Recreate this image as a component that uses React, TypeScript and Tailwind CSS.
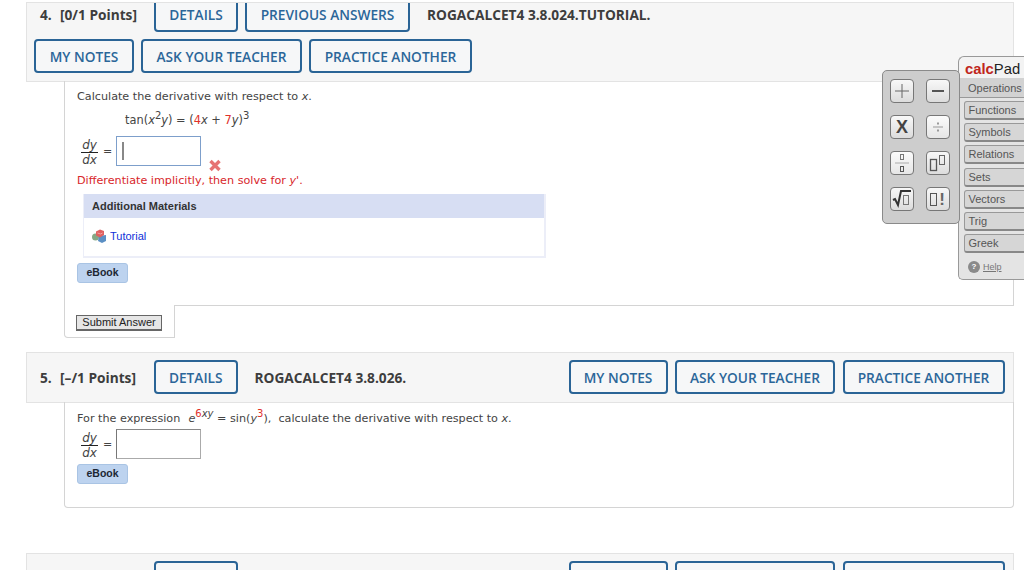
import type { ReactNode } from "react";

const sans = "font-['Open_Sans',sans-serif]";
const body = "font-['DejaVu_Sans',sans-serif]";
const arial = "font-['Liberation_Sans',Arial,sans-serif]";

function HeadButton({ children, className = "" }: { children?: ReactNode; className?: string }) {
    return (
        <button className={`${sans} h-[34px] shrink-0 rounded-[4px] border-2 border-[#2a6496] bg-[#f6f7f8] pt-[2px] text-[13.7px] font-semibold whitespace-nowrap text-[#2b6699] ${className}`}>
            {children}
        </button>
    );
}

function Label({ n, pts }: { n: string; pts: string }) {
    return (
        <div className={`${sans} flex w-[114px] shrink-0 gap-[5px] pt-[2px] text-[13.7px] font-bold text-[#3d3d3d]`}>
            <span className="w-[15px]">{n}</span>
            <span>{pts}</span>
        </div>
    );
}

function Code({ children }: { children: ReactNode }) {
    return <span className={`${sans} ml-[17px] pt-[2px] text-[13.7px] font-bold whitespace-nowrap text-[#3d3d3d]`}>{children}</span>;
}

function Frac() {
    return (
        <div className={`${body} flex w-[39px] shrink-0 items-center pt-[2px] pl-[4px] text-[12px] text-[#444]`}>
            <div className="flex w-[17px] flex-col items-center leading-[14px] italic">
                <span className="w-full border-b border-[#222] text-center">dy</span>
                <span>dx</span>
            </div>
            <span className="ml-[5px] text-[11px]">=</span>
        </div>
    );
}

function EBook() {
    return (
        <button className={`${arial} flex h-[20px] w-[51px] items-center justify-center rounded-[3px] border border-[#a9c4e4] bg-[#bdd3ef] text-[10.5px] font-bold text-[#1c2733]`}>
            eBook
        </button>
    );
}

function TutorialIcon() {
    return (
        <svg width="15" height="14" viewBox="0 0 15 14">
            <ellipse cx="3.5" cy="8" rx="3.5" ry="3.5" fill="#86a886" />
            <path d="M7 7l7 -1v6l-4 2l-4 -2z" fill="#5b8fc4" />
            <path d="M4 2.5l4 -2l4 1.5v4l-4 2.5l-4 -2z" fill="#e0605f" />
            <path d="M5.5 4l3 1l2 -1" fill="none" stroke="#f3b4b4" strokeWidth="0.8" />
        </svg>
    );
}

function KeyBtn({ children, light }: { children: ReactNode; light?: boolean }) {
    return (
        <div className={`flex h-[24px] w-[24px] items-center justify-center rounded-[4px] border border-[#777] bg-linear-to-b ${light ? "from-[#fbfbfb] to-[#e6e6e6]" : "from-[#f8f8f8] to-[#dcdcdc]"}`}>
            {children}
        </div>
    );
}

function CalcPad() {
    const tabs = ["Functions", "Symbols", "Relations", "Sets", "Vectors", "Trig", "Greek"];
    return (
        <>
            <div className="absolute top-[70px] left-[882px] z-20 h-[154px] w-[78px] rounded-[5px] border border-[#8a8a8a] bg-[#cdcdcd] pt-[8px] pl-[7px]">
                <div className="grid w-[60px] grid-cols-2 gap-x-[11px] gap-y-[12px]">
                    <KeyBtn>
                        <svg width="14" height="14" viewBox="0 0 14 14">
                            <path d="M7 0v14M0 7h14" stroke="#666" strokeWidth="1" />
                        </svg>
                    </KeyBtn>
                    <KeyBtn>
                        <svg width="14" height="14" viewBox="0 0 14 14">
                            <path d="M1 7h12" stroke="#555" strokeWidth="2" />
                        </svg>
                    </KeyBtn>
                    <KeyBtn>
                        <span className={`${arial} text-[18px] leading-none font-bold text-[#444]`}>X</span>
                    </KeyBtn>
                    <KeyBtn light>
                        <svg width="12" height="12" viewBox="0 0 12 12">
                            <path d="M1 6h10" stroke="#999" strokeWidth="1" />
                            <rect x="5" y="1.5" width="2" height="2" fill="#999" />
                            <rect x="5" y="8.5" width="2" height="2" fill="#999" />
                        </svg>
                    </KeyBtn>
                    <KeyBtn light>
                        <svg width="16" height="20" viewBox="0 0 16 20">
                            <rect x="6.5" y="1.5" width="3" height="5" fill="none" stroke="#777" />
                            <path d="M1 10h14" stroke="#aaa" />
                            <rect x="6.5" y="13.5" width="3" height="5" fill="none" stroke="#555" />
                        </svg>
                    </KeyBtn>
                    <KeyBtn>
                        <svg width="18" height="18" viewBox="0 0 18 18">
                            <rect x="1.5" y="5.5" width="6" height="11" fill="none" stroke="#555" strokeWidth="1.3" />
                            <rect x="10.5" y="1.5" width="5" height="9" fill="none" stroke="#666" />
                        </svg>
                    </KeyBtn>
                    <KeyBtn>
                        <svg width="20" height="18" viewBox="0 0 20 18">
                            <path d="M1 10l2 -1l3 6l3 -14h10" fill="none" stroke="#333" strokeWidth="2" />
                            <rect x="11.5" y="5.5" width="5" height="9" fill="none" stroke="#777" />
                        </svg>
                    </KeyBtn>
                    <KeyBtn>
                        <div className="flex items-center gap-[2px]">
                            <svg width="7" height="13" viewBox="0 0 7 13">
                                <rect x="0.5" y="0.5" width="6" height="12" fill="none" stroke="#555" />
                            </svg>
                            <span className={`${arial} text-[17px] leading-none font-bold text-[#666]`}>!</span>
                        </div>
                    </KeyBtn>
                </div>
            </div>
            <div className={`${arial} absolute top-[56px] left-[958px] z-10 flex h-[224px] w-[80px] flex-col`}>
                <div className="h-[22px] rounded-tl-[6px] border-t border-l border-[#999] bg-[#f3f3f3] pt-[4px] pl-[6px] text-[14.8px] leading-[17px] font-bold text-[#c0261c]">
                    calc<span className="font-normal text-[#222]">Pad</span>
                </div>
                <div className="h-[19px] bg-[#d2d2d2] pt-[1px] pl-[10px] text-[11px] leading-[19px] text-[#555]">Operations</div>
                <div className="flex flex-1 flex-col gap-[3.2px] rounded-bl-[5px] border-t border-b border-l border-[#999] bg-[#e4e4e4] pt-[3px] pl-[5px]">
                    {tabs.map((t) => (
                        <div key={t} className="h-[19px] rounded-l-[3px] border border-b-2 border-[#999] border-b-[#888] bg-[#d6d6d6] pl-[3.5px] text-[11px] leading-[16px] text-[#555]">
                            {t}
                        </div>
                    ))}
                    <div className="mt-[5px] flex items-center gap-[3px] pl-[4px]">
                        <span className="flex h-[12px] w-[12px] items-center justify-center rounded-full bg-[#8a8a8a] text-[8px] leading-none font-bold text-white">?</span>
                        <span className="text-[9px] leading-[12px] text-[#777] underline">Help</span>
                    </div>
                </div>
            </div>
        </>
    );
}

export default function App() {
    return (
        <div className="relative h-[570px] w-[1024px] overflow-hidden bg-white pt-[2px] pr-[10px] pl-[26px]">
            {/* question 4, header wraps to two rows and the top is scrolled off */}
            <div className="h-[80px] overflow-hidden border border-[#e3e3e3] bg-[#f6f6f6]">
                <div className="-mt-[6px] flex h-[35px] items-center pl-[13px]">
                    <Label n="4." pts="[0/1 Points]" />
                    <HeadButton className="w-[84px]">DETAILS</HeadButton>
                    <HeadButton className="ml-[7px] w-[165px]">PREVIOUS ANSWERS</HeadButton>
                    <Code>ROGACALCET4 3.8.024.TUTORIAL.</Code>
                </div>
                <div className="mt-[7px] flex gap-[7px] pl-[7px]">
                    <HeadButton className="w-[100px]">MY NOTES</HeadButton>
                    <HeadButton className="w-[161px]">ASK YOUR TEACHER</HeadButton>
                    <HeadButton className="w-[163px]">PRACTICE ANOTHER</HeadButton>
                </div>
            </div>
            <div className={`${body} ml-[38px] -mt-[1px] h-[225px] border-x border-b border-[#d4d4d4] pt-[8px] pl-[12px] text-[11.2px] text-[#444]`}>
                <p className="h-[16px] leading-[16px]">
                    Calculate the derivative with respect to <i>x</i>.
                </p>
                <p className="mt-[7px] ml-[48px] h-[16px] text-[11.4px] leading-[16px] whitespace-nowrap">
                    tan(<i>x</i>
                    <sup className="text-[10px]">2</sup>
                    <i>y</i>) = (<span className="text-[#e0302a]">4</span>
                    <i>x</i> + <span className="text-[#e0302a]">7</span>
                    <i>y</i>)<sup className="text-[10px]">3</sup>
                </p>
                <div className="mt-[8px] flex h-[36px] items-start">
                    <div className="flex h-[30px] items-center">
                        <Frac />
                    </div>
                    <div className="flex h-[30px] w-[85px] items-center border border-[#7d9fcb] bg-white pl-[5px]">
                        <div className="h-[18px] w-[2px] bg-[#888]" />
                    </div>
                    <svg className="mt-[23px] ml-[8px]" width="12" height="13" viewBox="0 0 12 13">
                        <path d="M1.5 2l9 9M10.5 2l-9 9" stroke="#e67373" strokeWidth="3.4" />
                    </svg>
                </div>
                <p className="mt-[1px] h-[15px] leading-[15px] text-[#d8262a]">
                    Differentiate implicitly, then solve for <i>y'</i>.
                </p>
                <div className="mt-[6px] ml-[6px] w-[463px] border-r-2 border-b-2 border-l border-[#eceef8]">
                    <div className={`${arial} h-[24px] bg-[#d7def3] pl-[8px] text-[11px] leading-[24px] font-bold text-[#333]`}>Additional Materials</div>
                    <div className="flex h-[38px] items-center gap-[3px] pb-[2px] pl-[8px]">
                        <TutorialIcon />
                        <span className={`${arial} text-[11px] text-[#1030d8]`}>Tutorial</span>
                    </div>
                </div>
                <div className="mt-[5px]">
                    <EBook />
                </div>
            </div>
            <div className="relative ml-[38px] -mt-[1px] h-[33px] w-[111px] rounded-bl-[4px] border-r border-b border-l border-[#d4d4d4] bg-white pt-[10px] pl-[11px]">
                <button className={`${arial} flex h-[16px] w-[86px] items-center justify-center border border-b-2 border-[#666] bg-[#e6e6e6] text-[11px] text-[#222]`}>
                    Submit Answer
                </button>
            </div>

            {/* question 5 */}
            <div className="mt-[14px]">
                <div className="flex h-[51px] items-center justify-between border border-[#e3e3e3] bg-[#f6f6f6] pr-[8.5px] pb-[1px] pl-[13px]">
                    <div className="flex items-center">
                        <Label n="5." pts="[–/1 Points]" />
                        <HeadButton className="w-[83.5px]">DETAILS</HeadButton>
                        <Code>ROGACALCET4 3.8.026.</Code>
                    </div>
                    <div className="flex gap-[7.5px]">
                        <HeadButton className="w-[99px]">MY NOTES</HeadButton>
                        <HeadButton className="w-[160px]">ASK YOUR TEACHER</HeadButton>
                        <HeadButton className="w-[162px]">PRACTICE ANOTHER</HeadButton>
                    </div>
                </div>
                <div className={`${body} ml-[38px] -mt-[1px] h-[106px] rounded-b-[4px] border-x border-b border-[#d4d4d4] pt-[9px] pl-[12px] text-[11.2px] text-[#444]`}>
                    <p className="h-[16px] leading-[16px] whitespace-nowrap">
                        For the expression&nbsp; <i className="ml-[1px]">e</i>
                        <sup className="text-[10px]">
                            <span className="text-[#e0302a]">6</span>
                            <i>xy</i>
                        </sup>{" "}
                        = sin(<i>y</i>
                        <sup className="text-[10px] text-[#e0302a]">3</sup>),&nbsp; calculate the derivative with respect to <i>x</i>.
                    </p>
                    <div className="mt-[2px] flex items-start">
                        <Frac />
                        <div className="h-[30px] w-[85px] border border-t-[#888] border-r-[#aaa] border-b-[#aaa] border-l-[#777] bg-white" />
                    </div>
                    <div className="mt-[4px]">
                        <EBook />
                    </div>
                </div>
            </div>

            {/* question 6, only its top edge shows so the labels stay off screen */}
            <div className="mt-[45px] flex h-[51px] items-center justify-between border border-[#e3e3e3] bg-[#f6f6f6] pr-[8.5px] pb-[1px] pl-[127px]">
                <HeadButton className="w-[83.5px]" />
                <div className="flex gap-[7.5px]">
                    <HeadButton className="w-[99px]" />
                    <HeadButton className="w-[160px]" />
                    <HeadButton className="w-[162px]" />
                </div>
            </div>

            <CalcPad />
        </div>
    );
}
